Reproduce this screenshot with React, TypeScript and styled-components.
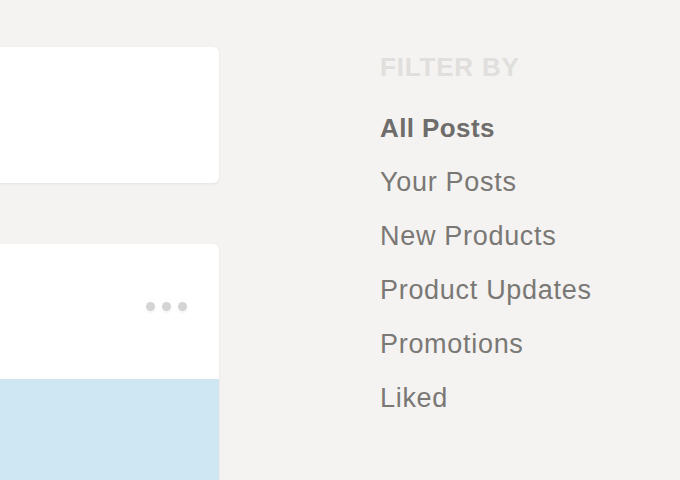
import React from 'react'
import styled, { createGlobalStyle } from 'styled-components'

const GlobalStyle = createGlobalStyle`
  html, body {
    margin: 0;
    padding: 0;
    background: #f4f3f1;
    font-family: "Liberation Sans", Arial, sans-serif;
    overflow: hidden;
  }
`

const filters = ['All Posts', 'Your Posts', 'New Products', 'Product Updates', 'Promotions', 'Liked']

const App = () => {
  return (
    <>
      <GlobalStyle />
      <Page.Container>
        {/* feed */}
        <Page.Feed>
          <Feed.Card>
            <Feed.Blank />
          </Feed.Card>
          <Feed.Card>
            <Feed.Header>
              <Feed.Dots>
                <Feed.Dot />
                <Feed.Dot />
                <Feed.Dot />
              </Feed.Dots>
            </Feed.Header>
            <Feed.Media />
          </Feed.Card>
        </Page.Feed>
        {/* sidebar */}
        <Page.Sidebar>
          <Sidebar.Title>FILTER BY</Sidebar.Title>
          <Sidebar.List>
            {filters.map((label, i) => (
              <Sidebar.Item key={label} active={i === 0}>
                {label}
              </Sidebar.Item>
            ))}
          </Sidebar.List>
        </Page.Sidebar>
      </Page.Container>
    </>
  )
}

export default App

const Page = {
  Container: styled.div`
    width: 680px;
    height: 480px;
    display: flex;
    align-items: flex-start;
    gap: 161px;
    padding-top: 47px;
    box-sizing: border-box;
    overflow: hidden;
  `,
  Feed: styled.div`
    width: 240px;
    margin-left: -21px;
    display: flex;
    flex-direction: column;
    gap: 61px;
    flex-shrink: 0;
  `,
  Sidebar: styled.div`
    display: flex;
    flex-direction: column;
    padding-top: 5px;
  `
}

const Feed = {
  Card: styled.div`
    background: #ffffff;
    border-radius: 6px;
    box-shadow: 0 1px 3px rgba(0, 0, 0, 0.07);
    overflow: hidden;
  `,
  Blank: styled.div`
    height: 136px;
  `,
  Header: styled.div`
    height: 135px;
    display: flex;
    align-items: center;
    justify-content: flex-end;
    padding-right: 32px;
  `,
  Dots: styled.div`
    display: flex;
    gap: 7px;
    margin-top: -10px;
  `,
  Dot: styled.span`
    width: 9px;
    height: 9px;
    border-radius: 50%;
    background: #d4d4d4;
    box-shadow: 0 2px 3px rgba(0, 0, 0, 0.05);
  `,
  Media: styled.div`
    height: 160px;
    background: #cfe7f2;
  `
}

const Sidebar = {
  Title: styled.div`
    font-size: 26px;
    line-height: 30px;
    font-weight: 700;
    letter-spacing: 0.8px;
    color: #e0dfdd;
    margin-bottom: 19px;
  `,
  List: styled.div`
    display: flex;
    flex-direction: column;
  `,
  Item: styled.div<{ active?: boolean }>`
    font-size: ${(p) => (p.active ? '26px' : '27px')};
    font-weight: ${(p) => (p.active ? 700 : 400)};
    line-height: 54px;
    letter-spacing: ${(p) => (p.active ? '0.4px' : '0.7px')};
    color: ${(p) => (p.active ? '#6f6d6b' : '#7a7875')};
    white-space: nowrap;
  `
}
